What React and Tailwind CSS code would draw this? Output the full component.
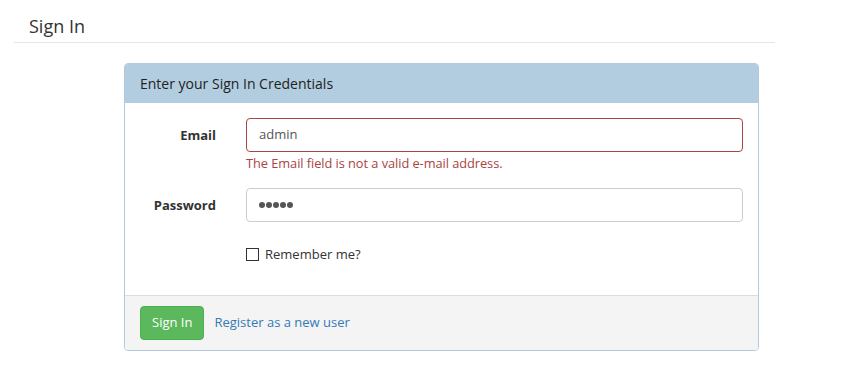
export default function App() {
  return (
    <div className="min-h-screen bg-white text-[#333] font-['Open_Sans',_'Liberation_Sans',_sans-serif] text-[13px]">
      <div className="pl-[14px] w-[775px]">
        <h2 className="pl-[15px] pt-[15px] pb-[5px] text-[18px] leading-[22px] text-[#333] border-b border-[#e5e5e5]">Sign In</h2>
      </div>

      <div className="ml-[124px] mt-[20px] w-[635px] border border-[#b3c9de] rounded-[4px] overflow-hidden">
        <div className="h-[39px] bg-[#b3cde0] border-b border-[#b3c9de] px-[15px] flex items-center text-[14px] text-[#222]">
          Enter your Sign In Credentials
        </div>

        <div className="pt-[15px] pb-[15px] pr-[15px]">
          <div className="flex">
            <label className="w-[91px] text-right font-bold pt-[8px] text-[13px]">Email</label>
            <div className="ml-[30px] flex-1">
              <div className="h-[34px] border border-[#a94442] rounded-[4px] px-[12px] flex items-center text-[13px] text-[#555]">admin</div>
              <div className="mt-[2px] text-[12.8px] tracking-[-0.05px] leading-[18px] text-[#a94442]">The Email field is not a valid e-mail address.</div>
            </div>
          </div>

          <div className="flex mt-[16px]">
            <label className="w-[91px] text-right font-bold pt-[8px] text-[13px]">Password</label>
            <div className="ml-[30px] flex-1">
              <div className="h-[34px] border border-[#ccc] rounded-[4px] px-[12px] flex items-center gap-[1px] text-[#555]">
                {[0, 1, 2, 3, 4].map(i => (
                  <span key={i} className="w-[6px] h-[6px] rounded-full bg-[#555]" />
                ))}
              </div>
            </div>
          </div>

          <div className="flex mt-[23px] mb-[15px]">
            <div className="w-[91px]" />
            <label className="ml-[30px] flex items-center gap-[6px] text-[13px]">
              <span className="w-[13px] h-[13px] border border-[#333] bg-white" />
              Remember me?
            </label>
          </div>
        </div>

        <div className="bg-[#f4f4f4] border-t border-[#ddd] px-[15px] py-[10px] flex items-center gap-[10px]">
          <button className="h-[34px] px-[11px] bg-[#5cb85c] border border-[#4cae4c] rounded-[4px] text-white text-[13px]">Sign In</button>
          <a className="text-[#337ab7] text-[13px]">Register as a new user</a>
        </div>
      </div>
    </div>
  )
}
